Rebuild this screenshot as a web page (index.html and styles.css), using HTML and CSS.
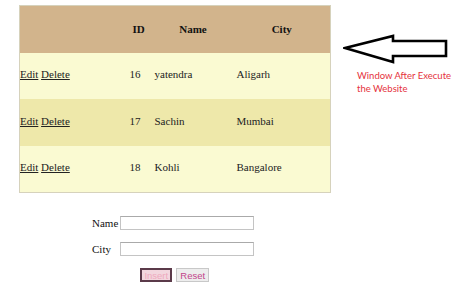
FILE: index.html
```html
<!DOCTYPE html>
<html>
<head>
<meta charset="utf-8">
<link rel="stylesheet" href="styles.css">
</head>
<body>
<div class="page">
  <div class="top">
    <table class="grid">
      <colgroup>
        <col class="c-act"><col class="c-id"><col class="c-name"><col class="c-city">
      </colgroup>
      <thead>
        <tr class="head"><th></th><th>ID</th><th>Name</th><th>City</th></tr>
      </thead>
      <tbody>
        <tr class="row"><td class="act"><a href="#">Edit</a> <a href="#">Delete</a></td><td class="id">16</td><td class="name">yatendra</td><td class="city">Aligarh</td></tr>
        <tr class="row alt"><td class="act"><a href="#">Edit</a> <a href="#">Delete</a></td><td class="id">17</td><td class="name">Sachin</td><td class="city">Mumbai</td></tr>
        <tr class="row"><td class="act"><a href="#">Edit</a> <a href="#">Delete</a></td><td class="id">18</td><td class="name">Kohli</td><td class="city">Bangalore</td></tr>
      </tbody>
    </table>
    <div class="note">
      <svg class="arrow" width="106" height="32" viewBox="343 33 106 32">
        <polygon points="345,48 393,36 393,41 446,41 446,56 393,56 393,62" fill="none" stroke="#000" stroke-width="2.6" stroke-linejoin="miter"/>
      </svg>
      <p class="note-text">Window After Execute<br>the Website</p>
    </div>
  </div>
  <form class="entry">
    <label class="lbl">Name</label><input class="field" type="text">
    <label class="lbl">City</label><input class="field" type="text">
    <div class="btns"><button type="button" class="btn btn-insert">Insert</button><button type="button" class="btn btn-reset">Reset</button></div>
  </form>
</div>
</body>
</html>
```
FILE: styles.css
```css
html, body { margin: 0; padding: 0; background: #fff; }
body { font-family: "Liberation Serif", "Times New Roman", serif; font-size: 11px; color: #000; }
.page { padding: 5px 0 0 19px; }
.top { display: flex; align-items: flex-start; }
.grid {
  border-collapse: collapse;
  table-layout: fixed;
  width: 312px;
  border: 1px solid #d6d2bc;
  font-size: 11px;
}
.c-act { width: 105px; }
.c-id { width: 28px; }
.c-name { width: 81px; }
.c-city { width: 97px; }
.grid th, .grid td { padding: 0; vertical-align: middle; }
.head { background: #d2b48c; height: 47px; }
.head th { font-weight: bold; text-align: center; color: #111; }
.row { background: #fafad2; height: 46.7px; }
.row.alt { background: #eee8aa; }
.grid td { color: #222; white-space: nowrap; padding-bottom: 3px; }
.act { padding-left: 0; }
.act a { color: #222; text-decoration: underline; }
.id { padding-left: 5px !important; }
.name { padding-left: 2px !important; }
.city { padding-left: 3px !important; }
.note { margin-left: 12px; margin-top: 28px; display: flex; flex-direction: column; }
.arrow { display: block; }
.note-text {
  margin: 4px 0 0 14px;
  font-family: Lato, "Liberation Sans", sans-serif;
  font-size: 9.5px;
  line-height: 13px;
  color: #e5323c;
}
.entry {
  margin: 23px 0 0 73px;
  display: grid;
  grid-template-columns: auto 134px;
  column-gap: 2px;
  row-gap: 12px;
  align-items: center;
  width: max-content;
}
.lbl { font-size: 11px; color: #111; line-height: 14px; }
.field {
  box-sizing: border-box;
  width: 134px;
  height: 14px;
  margin: 0;
  border: 1px solid #c4c4c4;
  border-top-color: #aaa;
  background: #fff;
  padding: 0;
}
.btns { grid-column: 2; display: flex; gap: 4px; padding-left: 20px; }
.btn {
  box-sizing: border-box;
  height: 14px;
  padding: 0 2px;
  font-family: "Liberation Sans", Arial, sans-serif;
  font-size: 9.5px;
  line-height: 11px;
  border-radius: 0;
  margin: 0;
}
.btn-insert { width: 32px; background: #f3d6de; color: #eea9bd; border: 2px solid #5b3a4a; }
.btn-reset { width: 33px; background: #ededed; color: #c2448a; border: 1px solid #c8c8c8; }
```
